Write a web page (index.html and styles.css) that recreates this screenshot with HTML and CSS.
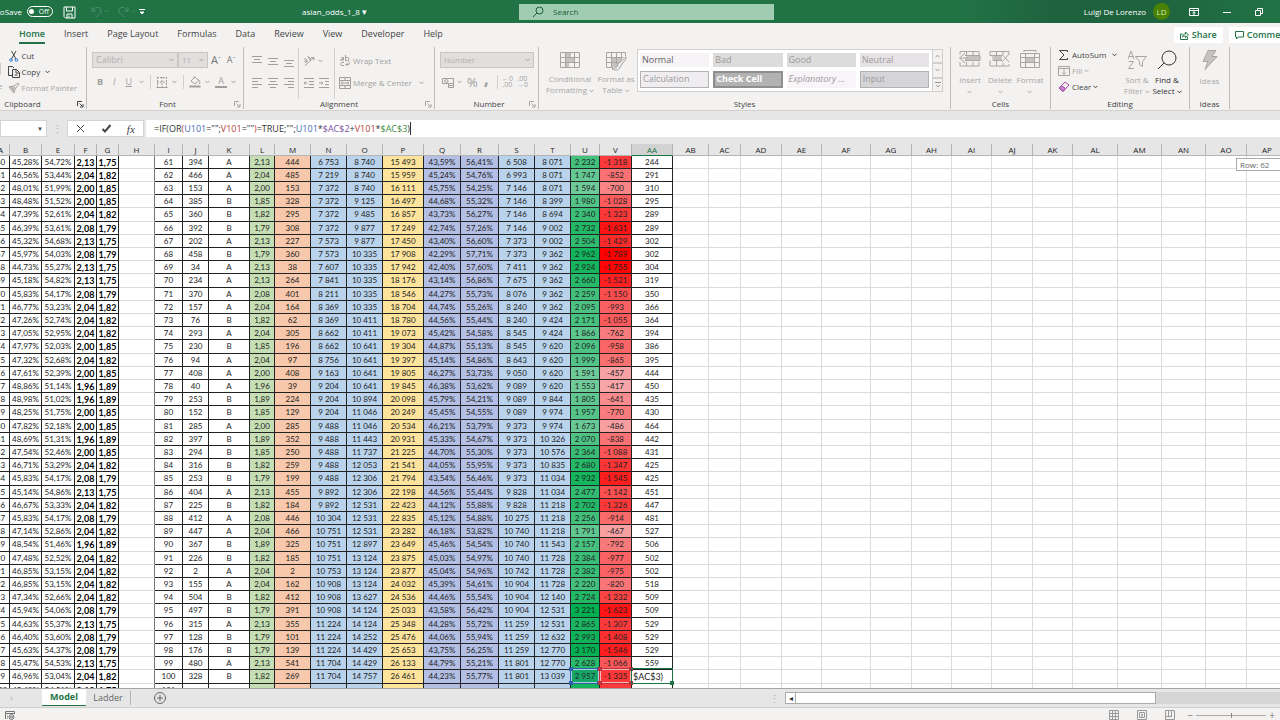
FILE: index.html
```html
<!DOCTYPE html>
<html lang="en">
<head>
  <meta charset="UTF-8">
  <title>asian_odds_1_8</title>
  <link rel="stylesheet" href="styles.css">
</head>
<body>
  <svg class="sprite" aria-hidden="true">
    <symbol id="caret" viewBox="0 0 5 4"><path d="M.5 .8l2 2 2-2"/></symbol>
    <symbol id="launch" viewBox="0 0 7 7"><path d="M.5 5V.5H5M2.5 2.5l3 3M6 3v3H3"/></symbol>
    <symbol id="al-t" viewBox="0 0 12 12"><path d="M1 1.5h10M3 4.5h6M1 7.5h10"/></symbol>
    <symbol id="al-m" viewBox="0 0 12 12"><path d="M1 3.5h10M3 6.5h6M1 9.5h10"/></symbol>
    <symbol id="al-b" viewBox="0 0 12 12"><path d="M1 5.5h10M3 8.5h6M1 11.5h10"/></symbol>
    <symbol id="al-l" viewBox="0 0 12 12"><path d="M1 1.5h10M1 4.5h6M1 7.5h10M1 10.5h6"/></symbol>
    <symbol id="al-c" viewBox="0 0 12 12"><path d="M1 1.5h10M3 4.5h6M1 7.5h10M3 10.5h6"/></symbol>
    <symbol id="al-r" viewBox="0 0 12 12"><path d="M1 1.5h10M5 4.5h6M1 7.5h10M5 10.5h6"/></symbol>
    <symbol id="outdent" viewBox="0 0 12 12"><path d="M1 1.5h10M6 4.5h5M6 7.5h5M1 10.5h10M4.5 6H1M2.5 4.5L1 6l1.5 1.5"/></symbol>
    <symbol id="indent" viewBox="0 0 12 12"><path d="M1 1.5h10M7 4.5h4M7 7.5h4M1 10.5h10M1 6h4M3.5 4.5L5 6 3.5 7.5"/></symbol>
  </svg>

  <header class="titlebar">
    <div class="quick">
      <label class="autosave">AutoSave <input type="checkbox" class="switch"><span class="knob">Off</span></label>
      <button class="save" aria-label="Save"><svg width="13" height="13" viewBox="0 0 13 13"><path d="M1 1h11v11H2.5L1 10.5zM3.5 1v4h6V1M4 12V8h5v4M6 9.5v2"/></svg></button>
      <button class="dim" aria-label="Undo"><svg width="18" height="12" viewBox="0 0 18 12"><path d="M1 1v4h4M1 5c2-4 8-5 9-1 .5 3-3 5-5 7M14 4.5l1.5 1.5L17 4.5"/></svg></button>
      <button class="dim" aria-label="Redo"><svg width="18" height="12" viewBox="0 0 18 12"><path d="M10 1v4H6M10 5C8 1 2 0 1 4c-.5 3 3 5 5 7M14 4.5l1.5 1.5L17 4.5"/></svg></button>
      <button class="custom" aria-label="Customize"><svg width="6" height="6" viewBox="0 0 6 6"><path d="M0 .5h6M1 3l2 2 2-2z"/></svg></button>
    </div>
    <button class="filename">asian_odds_1_8 <i>▾</i></button>
    <div class="search">
      <svg width="12" height="12" viewBox="0 0 12 12"><circle cx="7.5" cy="4.5" r="3.5"/><path d="M5 7L1 11"/></svg>
      <input type="search" placeholder="Search" aria-label="Search">
    </div>
    <div class="account">
      <span>Luigi De Lorenzo</span>
      <span class="avatar">LD</span>
      <button aria-label="Ribbon options"><svg width="10" height="8" viewBox="0 0 10 8"><path d="M.5.5h9v7h-9zM.5 2.5h9M5 7V4M3.5 5L5 3.7 6.5 5"/></svg></button>
      <button aria-label="Minimize"><svg width="8" height="8" viewBox="0 0 8 8"><path d="M0 4.5h8"/></svg></button>
      <button aria-label="Restore"><svg width="8" height="8" viewBox="0 0 8 8"><path d="M.5 2.5h5v5h-5zM2.5 2.5v-2h5v5h-2"/></svg></button>
    </div>
  </header>

  <nav class="tabs">
    <button class="on">Home</button>
    <button>Insert</button>
    <button>Page Layout</button>
    <button>Formulas</button>
    <button>Data</button>
    <button>Review</button>
    <button>View</button>
    <button>Developer</button>
    <button>Help</button>
    <div class="share">
      <button><svg width="9" height="9" viewBox="0 0 9 9"><path d="M2.5 3H.5v5.5h7V6M2.5 6c0-2 1-3 3-3V1l3 3-3 2.5V5c-1.5 0-2 0-3 1z"/></svg>Share</button>
      <button><svg width="9" height="9" viewBox="0 0 9 9"><path d="M.5.5h8v5.5h-5l-2 2V6h-1z"/></svg>Comments</button>
    </div>
  </nav>

  <main class="ribbon">
    <section class="group clipboard">
      <div class="body">
        <button class="big off paste"><svg width="18" height="22" viewBox="0 0 18 22"><path d="M1 3h12v16H1zM8 9h9v12H8z"/></svg>Paste</button>
        <div class="stack">
          <button><svg width="12" height="12" viewBox="0 0 12 12"><path d="M3.5 1l4.5 8M8 1L3.5 9"/><g class="blue"><circle cx="3" cy="10" r="1.3"/><circle cx="8.5" cy="10" r="1.3"/></g></svg>Cut</button>
          <button><svg width="12" height="12" viewBox="0 0 12 12"><path d="M4 9.5H.5v-9h4L6 2M4.5 3.5h4l3 3v5h-7zM8 3.5V7h3.5M6.5 9h3"/></svg>Copy <svg class="caret gap"><use href="#caret"/></svg></button>
          <button class="off"><svg width="12" height="12" viewBox="0 0 12 12"><path class="fill" d="M1 5l5 6 1-4-3-3z"/><path d="M1 5l5 6 1-4 4-5-1-1-4 3zM3 5l3 3M5 4l3 3"/></svg>Format Painter</button>
        </div>
      </div>
      <h2>Clipboard</h2><svg class="launch"><use href="#launch"/></svg>
    </section>

    <section class="group font">
      <div class="body rows">
        <div class="line">
          <span class="drop family"><select aria-label="Font"><option>Calibri</option></select><svg class="caret"><use href="#caret"/></svg></span>
          <span class="drop size"><select aria-label="Font size"><option>11</option></select><svg class="caret"><use href="#caret"/></svg></span>
          <button class="grow">A<sup>ˆ</sup></button><button class="shrink">A<sup>ˇ</sup></button>
        </div>
        <div class="line marks">
          <button class="b">B</button><button class="i">I</button><button class="u">U</button>
          <svg class="caret"><use href="#caret"/></svg><span class="rule"></span>
          <button aria-label="Borders"><svg width="12" height="12" viewBox="0 0 12 12"><path d="M1 1.5h10M1 6h10M1.5 1v10M6 1v10M10.5 1v10" stroke-dasharray="2 1"/><path d="M.5 11.5h11"/></svg></button>
          <svg class="caret"><use href="#caret"/></svg><span class="rule"></span>
          <button aria-label="Fill colour"><svg width="12" height="12" viewBox="0 0 12 12"><path d="M2 5l4-4 3.5 3.5L6 8zM5 2V.5M9 4c2 0 2 2 1.5 4"/><path d="M.5 10.5h11" stroke-width="2"/></svg></button>
          <svg class="caret"><use href="#caret"/></svg>
          <button class="ink">A</button>
          <svg class="caret"><use href="#caret"/></svg>
        </div>
      </div>
      <h2>Font</h2><svg class="launch off"><use href="#launch"/></svg>
    </section>

    <section class="group align">
      <div class="body">
        <div class="rows trio">
          <div class="line"><button aria-label="Top"><svg class="ic"><use href="#al-t"/></svg></button><button aria-label="Middle"><svg class="ic"><use href="#al-m"/></svg></button><button aria-label="Bottom"><svg class="ic"><use href="#al-b"/></svg></button></div>
          <div class="line"><button aria-label="Left"><svg class="ic"><use href="#al-l"/></svg></button><button aria-label="Center"><svg class="ic"><use href="#al-c"/></svg></button><button aria-label="Right"><svg class="ic"><use href="#al-r"/></svg></button></div>
        </div>
        <div class="rows duo">
          <div class="line"><button aria-label="Orientation"><svg class="ic" viewBox="0 0 12 12"><path d="M2 10.5l9-8M8 2.5h3v3M1 4.5c2-2 3 0 3 2.5M4 5.5c-2-.5-3 .5-2 1.5s2 0 2-1M5 1l2 4c1-2 0-3-1-2"/></svg></button><svg class="caret"><use href="#caret"/></svg></div>
          <div class="line"><button aria-label="Decrease indent"><svg class="ic"><use href="#outdent"/></svg></button><button aria-label="Increase indent"><svg class="ic"><use href="#indent"/></svg></button></div>
        </div>
        <div class="rows wrap">
          <div class="line"><button><svg class="ic" viewBox="0 0 12 12"><path d="M4.5 5.5V2.5h-2M4.5 4c-3-.5-4 1.5-2 1.5l2-1M6.5 0v5.5h2c2 0 2-3 0-3h-2M5 7.5H3c-2 0-2 3 0 3h2M7 9.5h2c2 0 2-3 0-3M8.5 8L7 9.5 8.5 11"/></svg>Wrap Text</button></div>
          <div class="line"><button><svg class="ic" viewBox="0 0 12 12"><path d="M.5.5h11v11H.5zM.5 3.5h11M.5 8.5h11M6 .5v3M6 8.5v3M2 6h8M3.5 4.5L2 6l1.5 1.5M8.5 4.5L10 6 8.5 7.5"/></svg>Merge &amp; Center</button><svg class="caret"><use href="#caret"/></svg></div>
        </div>
      </div>
      <h2>Alignment</h2><svg class="launch off"><use href="#launch"/></svg>
    </section>

    <section class="group number">
      <div class="body rows">
        <div class="line"><span class="drop format"><select aria-label="Number format"><option>Number</option></select><svg class="caret"><use href="#caret"/></svg></span></div>
        <div class="line">
          <button aria-label="Accounting"><svg class="ic" viewBox="0 0 12 12"><path d="M.5 2.5h11v5H.5zM4.5 3.5c2 0 2 3 0 3s-2-3 0-3zM2 5h1M6.5 7.5h5v4h-5zM6.5 9.5h5"/></svg></button>
          <svg class="caret"><use href="#caret"/></svg>
          <button class="pct">%</button><button class="comma">,</button><span class="rule"></span>
          <button class="dec"><span>←0</span><span>.00</span></button>
          <button class="dec"><span>.00</span><span>→0</span></button>
        </div>
      </div>
      <h2>Number</h2><svg class="launch off"><use href="#launch"/></svg>
    </section>

    <section class="group styles">
      <div class="body">
        <button class="big off cf"><svg width="20" height="16" viewBox="0 0 20 16"><path class="fill" d="M5 1h5v4H5zM5 5h9v5H5zM5 10h4v5H5z"/><path d="M.5.5h19v15H.5zM.5 5.5h19M.5 10.5h19M5.5 0v16M14.5 0v16M10 0v5"/></svg><span>Conditional<br>Formatting <svg class="caret"><use href="#caret"/></svg></span></button>
        <button class="big off ft"><svg width="21" height="19" viewBox="0 0 21 19"><path class="fill" d="M5 5h10v10H5z"/><path d="M.5.5h19v4M.5.5v15H7M.5 5.5h17M.5 10.5h12M5.5 0v16M10.5 0v12M15.5 0v8"/><path class="white" d="M20 5l-8 7-1 3-5 2c4 2 8 1 8-2l6-8z"/></svg><span>Format as<br>Table <svg class="caret"><use href="#caret"/></svg></span></button>
        <div class="gallery">
          <button class="s-normal">Normal</button><button class="s-bad">Bad</button><button class="s-bad">Good</button><button class="s-neutral">Neutral</button>
          <button class="s-calc">Calculation</button><button class="s-check">Check Cell</button><button class="s-expl">Explanatory ...</button><button class="s-input">Input</button>
        </div>
        <div class="scroller">
          <button aria-label="Up"><svg class="caret up"><use href="#caret"/></svg></button><button aria-label="Down"><svg class="caret"><use href="#caret"/></svg></button><button aria-label="More"><svg width="6" height="6" viewBox="0 0 6 6"><path d="M0 .5h6M1 3l2 2 2-2"/></svg></button>
        </div>
      </div>
      <h2>Styles</h2>
    </section>

    <section class="group cells">
      <div class="body">
        <button class="big off"><svg width="22" height="18" viewBox="0 0 22 18"><path class="fill" d="M8 6h13v5H5z"/><path d="M1 1.5h19v4M1 1.5v3M1 12v4h19v-4M7.5 1v4M14 1v4M7.5 12v4M14 12v4M6 5.5h15v5H6M6 3L.5 8 6 13M1 8h8"/></svg><span>Insert<br><svg class="caret"><use href="#caret"/></svg></span></button>
        <button class="big off"><svg width="22" height="18" viewBox="0 0 22 18"><path class="fill" d="M5 6h8v5H5z"/><path d="M1 1.5h19v3M1 1.5v4h12M1 10.5v5.5h19v-2M7.5 1v4M14 1v3M7.5 11v5M14 13v3M4 5.5v5h9M13 4l7 8M20 4l-7 8"/></svg><span>Delete<br><svg class="caret"><use href="#caret"/></svg></span></button>
        <button class="big off"><svg width="22" height="18" viewBox="0 0 22 18"><path class="fill" d="M6 8h10v4H6z"/><path d="M1.5 3.5h19v14h-19zM1.5 7.5h19M1.5 12.5h19M6.5 3v14M15.5 3v14M5 .5h12M5 0v2M17 0v2"/></svg><span>Format<br><svg class="caret"><use href="#caret"/></svg></span></button>
      </div>
      <h2>Cells</h2>
    </section>

    <section class="group editing">
      <div class="body">
        <div class="stack">
          <button><svg width="12" height="12" viewBox="0 0 12 12"><path d="M9.5 3V1.5H1.5L6 6l-4.5 4.5h8V9"/></svg>AutoSum <svg class="caret gap"><use href="#caret"/></svg></button>
          <button class="off"><svg width="12" height="12" viewBox="0 0 12 12"><path d="M.5 1.5h11v9H.5zM.5 3.5h11M6 4.5v5M4 7.5l2 2 2-2"/></svg>Fill <svg class="caret"><use href="#caret"/></svg></button>
          <button><svg class="purple" width="12" height="12" viewBox="0 0 12 12"><path d="M1 7l6-6 4 3-6 6.5z"/><path class="solid" d="M1 7l2.5-2.5 4 3L5 10.5z"/></svg>Clear <svg class="caret"><use href="#caret"/></svg></button>
        </div>
        <button class="big off sort"><svg width="20" height="20" viewBox="0 0 20 20"><path d="M1 9l3-8 3 8M2 6.5h4M1.5 11.5h5l-5 7h5.5M8.5 6.5h11l-4 5v5l-3-2v-3z"/></svg><span>Sort &amp;<br>Filter <svg class="caret"><use href="#caret"/></svg></span></button>
        <button class="big find"><svg width="20" height="20" viewBox="0 0 20 20"><circle cx="12" cy="8" r="7"/><path d="M7 13l-6 6"/></svg><span>Find &amp;<br>Select <svg class="caret"><use href="#caret"/></svg></span></button>
      </div>
      <h2>Editing</h2>
    </section>

    <section class="group ideas">
      <div class="body">
        <button class="big off"><svg width="16" height="20" viewBox="0 0 16 20"><path class="fill" d="M6 .5h8l-4 6h5L3 19.5l3-8H1z"/><path d="M6 .5h8l-4 6h5L3 19.5l3-8H1z"/></svg><span>Ideas</span></button>
      </div>
      <h2>Ideas</h2>
    </section>
  </main>

  <div class="formulabar">
    <div class="namebox"><input type="text" aria-label="Name box"><i>▼</i></div>
    <span class="grip">⋮</span>
    <div class="fx">
      <button aria-label="Cancel"><svg width="9" height="9" viewBox="0 0 9 9"><path d="M1 1l7 7M8 1L1 8"/></svg></button>
      <button aria-label="Enter"><svg width="9" height="9" viewBox="0 0 9 9"><path class="tick" d="M.5 5L3 7.5 8.5 1"/></svg></button>
      <button class="fn">fx</button>
    </div>
    <div class="formula" role="textbox" aria-label="Formula bar" contenteditable="true" spellcheck="false">=IF(OR<span class="red">(</span><span class="blue">U101</span>="";<span class="red">V101</span>=""<span class="red">)</span>=TRUE;"";<span class="blue">U101</span>*<span class="violet">$AC$2</span>+<span class="red">V101</span>*<span class="green">$AC$3</span>)<span class="cursor"></span></div>
  </div>

  <div class="sheet">
    <table>
      <colgroup></colgroup>
      <thead><tr></tr></thead>
      <tbody></tbody>
    </table>
    <div class="rowtip">Row: 62</div>
  </div>

  <footer class="sheets">
    <div class="pick">
      <span class="arrow">›</span>
      <button class="on">Model</button>
      <button>Ladder</button>
      <button class="add" aria-label="New sheet"><svg width="12" height="12" viewBox="0 0 12 12"><circle cx="6" cy="6" r="5.5"/><path d="M3 6h6M6 3v6"/></svg></button>
    </div>
    <span class="grip">⋮</span>
    <div class="hscroll"><button aria-label="Scroll left">◂</button><span class="thumb"></span></div>
  </footer>

  <div class="status">
    <svg width="10" height="9" viewBox="0 0 10 9"><path d="M.5 8V.5h9V3M.5 2.5h9M2 5h1M2 7h1"/><circle cx="6.5" cy="6" r="2.5"/><circle cx="6.5" cy="6" r="1"/></svg>
    <div class="views">
      <button aria-label="Normal view"><svg width="10" height="10" viewBox="0 0 10 10"><path d="M.5.5h9v9h-9zM.5 3.5h9M.5 6.5h9M3.5.5v9M6.5.5v9"/></svg></button>
      <button aria-label="Page layout view"><svg width="10" height="10" viewBox="0 0 10 10"><path d="M.5.5h9v9h-9zM2.5 2.5h5v5h-5zM4 4.5h2M4 6h2"/></svg></button>
      <button aria-label="Page break view"><svg width="10" height="10" viewBox="0 0 10 10"><path d="M.5.5h9v9h-9zM3.5.5v6h3v-6M.5 6.5h6"/></svg></button>
    </div>
    <div class="zoom"><span>−</span><input type="range" aria-label="Zoom" value="50"><span>+</span></div>
  </div>

  <script src="sheet.js"></script>
</body>
</html>
```
FILE: styles.css
```css
* { box-sizing: border-box; }
body {
  margin: 0;
  height: 100vh;
  display: flex;
  flex-direction: column;
  overflow: hidden;
  font-family: "Open Sans", "Noto Sans", sans-serif;
  font-size: 8px;
  line-height: 12px;
  color: #444;
  background: #f3f2f1;
}
button, input, select {
  font: inherit;
  color: inherit;
  background: none;
  border: 0;
  padding: 0;
  margin: 0;
}
button { white-space: nowrap; }
svg { fill: none; stroke: currentColor; flex: none; }
i { font-style: normal; }
.sprite { position: absolute; width: 0; height: 0; }
.caret { width: 5px; height: 4px; }
.caret.gap { margin-left: 4px; }
.caret.up { transform: rotate(180deg); }

/* title bar */
.titlebar {
  flex: none;
  height: 23px;
  display: grid;
  grid-template-columns: 302px 217px 255px 1fr;
  align-items: center;
  color: #fff;
  background: linear-gradient(90deg, #217346 75%, #1f633e 82%, #1f633e 90%, #217346);
}
.quick { display: flex; align-items: center; margin-left: -13px; }
.autosave { display: flex; align-items: center; gap: 5px; position: relative; }
.switch {
  appearance: none;
  width: 26px;
  height: 11px;
  border: 1px solid #fff;
  border-radius: 6px;
}
.knob { position: absolute; right: 4px; font-size: 7px; }
.knob::before {
  content: "";
  display: inline-block;
  width: 5px;
  height: 5px;
  margin-right: 5px;
  border-radius: 50%;
  background: #fff;
}
.save { margin: 2px 15px 0 10px; height: 13px; }
.dim { color: #4d9069; margin-right: 9px; height: 12px; }
.custom { height: 8px; line-height: 0; margin-left: -6px; }
.custom path { fill: #fff; }
.filename { justify-self: start; }
.filename i { font-size: 9px; }
.search {
  height: 16px;
  display: flex;
  align-items: center;
  gap: 9px;
  padding-left: 13px;
  color: #185c37;
  background: #a0cdb1;
}
.search input { flex: 1; min-width: 0; outline: 0; appearance: none; }
.search ::placeholder { color: #185c37; }
.account { justify-self: end; display: flex; align-items: center; padding-right: 17px; }
.account button { height: 8px; line-height: 0; margin-left: 24px; }
.avatar {
  width: 17px;
  height: 17px;
  line-height: 17px;
  margin: 0 -5px 0 7px;
  border-radius: 50%;
  text-align: center;
  background: #498205;
  color: #d9eab0;
}

/* ribbon tabs */
.tabs {
  flex: none;
  height: 24px;
  display: flex;
  align-items: center;
  gap: 19px;
  padding-left: 19px;
  font-size: 9px;
}
.tabs > button { height: 18px; border-bottom: 2px solid transparent; }
.tabs > .on { font-weight: 600; color: #217346; border-color: #217346; }
.share { margin-left: auto; display: flex; gap: 6px; font-weight: 600; color: #217346; margin-right: -20px; }
.share button {
  height: 16px;
  padding: 0 6px;
  display: flex;
  align-items: center;
  gap: 3px;
  background: #fff;
}

/* ribbon */
.ribbon {
  flex: none;
  display: flex;
  height: 64px;
  padding: 0 0 1px;
  border-bottom: 1px solid #d2d0ce;
}
.group {
  flex: none;
  position: relative;
  display: flex;
  flex-direction: column;
  border-right: 1px solid #c0bebc;
}
.group h2 {
  margin: 0;
  font-size: 8px;
  font-weight: 400;
  text-align: center;
  line-height: 10px;
}
.launch { position: absolute; right: 2px; bottom: 1px; width: 7px; height: 7px; }
.off { color: #a8a6a5; }
.fill { fill: #c4c3c2; stroke: none; }
.white { fill: #eee; }
.body { flex: 1; display: flex; padding-top: 1px; }
.rows { display: flex; flex-direction: column; gap: 6px; padding-top: 5px; }
.line { display: flex; align-items: center; height: 16px; }
.line button, .stack button { display: flex; align-items: center; }
.stack { display: flex; flex-direction: column; gap: 4px; padding-top: 1px; }
.stack button { height: 12px; gap: 2px; }
.big {
  display: flex;
  flex-direction: column;
  align-items: center;
  line-height: 11px;
}
.ic { width: 12px; height: 12px; }
.rule { width: 1px; height: 14px; background: #d2d0ce; }

.clipboard { width: 128px; margin-left: -41px; }
.clipboard .body { padding-left: 23px; gap: 6px; }
.clipboard .stack { padding-top: 2px; gap: 4px; }
.clipboard .stack button { gap: 1px; }
.clipboard .big { padding-top: 6px; gap: 4px; }
.clipboard .blue { color: #2b7cd3; }

.font, .align, .number { color: #a19f9d; }
.font h2, .align h2, .number h2 { color: #444; }
.font { width: 157px; padding-left: 5px; }
.drop { position: relative; }
.drop .caret { position: absolute; right: 4px; top: 6px; pointer-events: none; }
.drop select {
  appearance: none;
  display: block;
  width: 100%;
  height: 16px;
  padding: 0 3px;
  border: 1px solid #c8c6c4;
  color: #b1afad;
  background: #e1dfdd;
}
.family { width: 86px; }
.family select { font-size: 9px; }
.size { width: 30px; }
.grow { font-size: 11px; margin-left: 3px; }
.shrink { font-size: 9px; margin-left: 6px; }
.grow, .shrink { color: #7a7877; }
sup { font-size: 7px; line-height: 0; }
.marks { padding-left: 5px; font-size: 9px; }
.marks .b { font-weight: 700; margin-right: 10px; }
.marks .i { font-style: italic; margin-right: 10px; }
.marks .u { text-decoration: underline; margin-right: 7px; }
.marks .rule { margin: 0 5px 0 6px; }
.marks .caret { margin-left: 4px; }
.marks .u + .caret { margin-left: 0; }
.marks .ink { width: 12px; height: 12px; justify-content: center; border-bottom: 2px solid; margin-left: 5px; }

.align { width: 191px; }
.trio { padding-left: 7px; }
.trio .line { gap: 4px; }
.duo { margin-left: 3px; padding-left: 4px; }
.duo .line { gap: 3px; }
.wrap { padding-left: 4px; margin-left: 4px; }
.trio + .duo, .duo + .wrap { border-left: 1px solid #d2d0ce; }
.wrap button { gap: 2px; margin-right: 7px; }

.number { width: 104px; padding-left: 5px; }
.format { width: 94px; }
.number .line + .line { padding-left: 2px; }
.number .line .caret { margin: 0 5px 0 3px; }
.number .drop .caret { margin: 0; }
.pct { font-size: 13px; }
.comma { font-size: 18px; font-weight: 700; margin: -9px 8px 0 6px; }
.number .line .dec { flex-direction: column; font-size: 7px; line-height: 6px; margin-left: 4px; }

.styles { width: 412px; }
.styles .body { padding-top: 5px; }
.cf { width: 50px; margin-left: 6px; gap: 5px; }
.ft { width: 42px; gap: 2px; }
.gallery {
  flex: 1;
  height: 43px;
  margin-top: -3px;
  display: grid;
  grid-template-columns: repeat(4, 1fr);
  gap: 4px;
  padding: 3px 3px 3px 2px;
  background: #fff;
  border: 1px solid #d2d0ce;
}
.gallery button {
  font-size: 9px;
  line-height: 12px;
  text-align: left;
  padding-left: 2px;
  color: #9c9a9b;
  overflow: hidden;
}
.gallery .s-normal { color: #666; background: #f7f3f6; }
.gallery .s-bad { background: #dddcdd; }
.gallery .s-neutral { background: #e7e2e6; }
.gallery .s-calc { background: #efedef; border: 1px solid #b3b2b3; }
.gallery .s-check { background: #b3b2b3; border: 2px solid #8f8e8f; color: #fff; font-weight: 700; padding-left: 1px; }
.gallery .s-expl { background: #f8f4f8; font-style: italic; }
.gallery .s-input { background: #d5d4d6; border: 1px solid #b3b2b3; }
.scroller { width: 10px; height: 43px; margin: -3px 7px 0 0; display: flex; flex-direction: column; }
.scroller button { flex: 1; border: 1px solid #d2d0ce; border-left: 0; line-height: 0; color: #999; }

.cells { width: 100px; }
.cells .body { padding: 3px 0 0 4px; }
.cells .big, .editing .big { width: 30px; gap: 6px; }
.editing { width: 139px; }
.editing .body { padding: 2px 0 0 7px; }
.editing .stack { width: 64px; padding-top: 0; }
.editing .body .big { gap: 4px; padding-top: 1px; }
.editing .find { color: #333; }
.purple { color: #a349a4; }
.purple .solid { fill: #c982cb; }
.ideas { width: 40px; }
.ideas .big { width: 40px; padding-top: 2px; gap: 5px; }

/* formula bar */
.formulabar {
  flex: none;
  height: 33px;
  display: flex;
  padding: 9px 0 7px;
  background: #e6e6e6;
}
.namebox { width: 47px; display: flex; background: #fff; border: 1px solid #d4d4d4; align-items: center; }
.namebox input { width: 36px; }
.namebox i { font-size: 6px; }
.grip { width: 20px; text-align: center; line-height: 17px; font-size: 11px; color: #aaa; }
.fx { width: 77px; margin-right: 2px; display: flex; justify-content: space-around; align-items: center; background: #fff; border: 1px solid #d4d4d4; }
.fx button { line-height: 0; }
.fx .tick { stroke-width: 2; }
.fx .fn { font-family: "Liberation Serif", serif; font-style: italic; font-size: 11px; line-height: 12px; }
.formula { flex: 1; padding-left: 8px; font-size: 9px; line-height: 17px; background: #fff; color: #333; white-space: nowrap; outline: 0; }
.formula .red { color: #b8433b; }
.formula .blue { color: #3d6cb5; }
.formula .violet { color: #7c4fa3; }
.formula .green { color: #3d8b40; }
.cursor { border-right: 1px solid #333; }

/* sheet */
.sheet {
  flex: 1;
  min-height: 0;
  position: relative;
  overflow: hidden;
  background: #fff;
  border-bottom: 1px solid #a6a6a6;
}
table {
  table-layout: fixed;
  width: 0;
  margin-left: -8px;
  border-collapse: separate;
  border-spacing: 0;
  font-family: Lato, Carlito, sans-serif;
  color: #222;
}
th, td {
  height: 13px;
  padding: 0;
  line-height: 12px;
  text-align: center;
  white-space: nowrap;
  border: 0 solid #dcdcdc;
  border-width: 0 1px 1px 0;
}
tr:nth-child(5n) td { height: 14px; line-height: 13px; }
th {
  height: 12px;
  line-height: 11px;
  font-family: "Open Sans", sans-serif;
  font-weight: 400;
  border-color: #b5b5b5;
  background: #e6e6e6;
}
th.sel { color: #217346; background: #d2d2d2; border-bottom: 1px solid #217346; }
td.c { border-color: #222; }
td.c-H { border-right-color: #777; }
tr td.c-F, tr td.c-G { font-weight: 700; font-size: 9px; line-height: 11px; color: #000; }
td.c-G { border-right-color: #222; }
td.c-L { background: #c6deb4; }
td.c-M { background: #f7c8ab; }
td.c-N, td.c-O, td.c-S, td.c-T { background: #b9d3ed; }
td.c-P { background: #fde39b; }
td.c-Q, td.c-R { background: #b3bfe4; }

/* coloured references of the formula being edited */
.ref { position: relative; }
.box { position: absolute; z-index: 1; inset: -2px -1px -1px -1px; border: 1px solid; }
.box::before, .box::after {
  content: "";
  position: absolute;
  left: -2px;
  right: -2px;
  height: 4px;
  border: solid;
  border-width: 0 4px;
}
.box::before { top: -2px; }
.box::after { bottom: -2px; }
.box.blue { color: #2f5fa8; background: rgba(47, 95, 168, .15); }
.box.red { color: #c0303a; box-shadow: inset 0 0 0 1px #f4b8bb; }
.box.blue { box-shadow: inset 0 0 0 1px #a9cfe0; }
.box.green { color: #217346; }
.box.green::before { display: none; }
.box.green::after { border-left: 0; }
.ref.edit { text-align: left; padding-left: 1px; font-size: 9px; }

.rowtip {
  position: absolute;
  top: 14px;
  right: 0;
  width: 44px;
  height: 13px;
  padding-left: 3px;
  line-height: 11px;
  color: #666;
  background: #fff;
  border: 1px solid #aaa;
  border-right: 0;
}

/* sheet tabs */
.sheets { flex: none; height: 19px; display: flex; align-items: center; background: #e6e6e6; border-bottom: 1px solid #cfcfcf; }
.pick { flex: 1; display: flex; align-items: center; align-self: stretch; font-size: 9px; color: #666; }
.pick .arrow { width: 42px; padding-left: 10px; color: #aaa; }
.pick .on { width: 44px; height: 17px; align-self: flex-start; font-weight: 700; color: #217346; background: #fff; border-bottom: 1px solid #217346; }
.pick .on + button { width: 45px; height: 14px; border-right: 1px solid #b5b5b5; }
.pick .add { margin-left: 23px; height: 12px; line-height: 0; }
.sheets .grip { width: 22px; }
.hscroll { width: 495px; height: 12px; display: flex; background: #d6d6d6; }
.hscroll button { width: 11px; background: #fff; border: 1px solid #ababab; line-height: 8px; color: #333; }
.hscroll .thumb { width: 360px; background: #fff; border: 1px solid #ababab; border-left: 0; }

.status { flex: none; height: 12px; display: flex; align-items: center; padding: 2px 5px 0 5px; color: #777; }
.views { margin-left: auto; display: flex; gap: 18px; }
.views button { height: 10px; line-height: 0; color: #999; }
.zoom { display: flex; align-items: center; gap: 3px; margin-left: 13px; font-size: 10px; }
.zoom input { appearance: none; width: 70px; height: 1px; background: #aaa; }
.zoom input::-webkit-slider-thumb { appearance: none; width: 1px; height: 5px; background: #888; }
```
FILE: sheet.js
```js
const columns = [
  ["A", 18], ["B", 32], ["E", 33], ["F", 22], ["G", 22], ["H", 36], ["I", 28], ["J", 26],
  ["K", 41], ["L", 25], ["M", 36], ["N", 36], ["O", 36], ["P", 41], ["Q", 37], ["R", 38],
  ["S", 36], ["T", 36], ["U", 29], ["V", 32], ["AA", 41], ["AB", 36], ["AC", 32], ["AD", 41],
  ["AE", 40], ["AF", 49], ["AG", 41], ["AH", 40], ["AI", 40], ["AJ", 41], ["AK", 40],
  ["AL", 45], ["AM", 44], ["AN", 44], ["AO", 41], ["AP", 41], ["AQ", 41]
];

// odds for side A -> odds for side B
const odds = { "2,13": "1,75", "2,08": "1,79", "2,04": "1,82", "2,00": "1,85", "1,96": "1,89" };

// B F J K M N O P Q S T U V AA
const data = `
45.28 2,13 394 A 444 6753 8740 15493 43.59 6508 8071 2232 -1318 244
46.56 2,04 466 A 485 7219 8740 15959 45.24 6993 8071 1747 -852 291
48.01 2,00 153 A 153 7372 8740 16111 45.75 7146 8071 1594 -700 310
48.48 2,00 385 B 328 7372 9125 16497 44.68 7146 8399 1980 -1028 295
47.39 2,04 360 B 295 7372 9485 16857 43.73 7146 8694 2340 -1323 289
46.39 2,08 392 B 308 7372 9877 17249 42.74 7146 9002 2732 -1631 289
45.32 2,13 202 A 227 7573 9877 17450 43.40 7373 9002 2504 -1429 302
45.97 2,08 458 B 360 7573 10335 17908 42.29 7373 9362 2962 -1789 302
44.73 2,13 34 A 38 7607 10335 17942 42.40 7411 9362 2924 -1755 304
45.18 2,13 234 A 264 7841 10335 18176 43.14 7675 9362 2660 -1521 319
45.83 2,08 370 A 401 8211 10335 18546 44.27 8076 9362 2259 -1150 350
46.77 2,04 157 A 164 8369 10335 18704 44.74 8240 9362 2095 -993 366
47.26 2,04 76 B 62 8369 10411 18780 44.56 8240 9424 2171 -1055 364
47.05 2,04 293 A 305 8662 10411 19073 45.42 8545 9424 1866 -762 394
47.97 2,00 230 B 196 8662 10641 19304 44.87 8545 9620 2096 -958 386
47.32 2,04 94 A 97 8756 10641 19397 45.14 8643 9620 1999 -865 395
47.61 2,00 408 A 408 9163 10641 19805 46.27 9050 9620 1591 -457 444
48.86 1,96 40 A 39 9204 10641 19845 46.38 9089 9620 1553 -417 450
48.98 1,96 253 B 224 9204 10894 20098 45.79 9089 9844 1805 -641 435
48.25 2,00 152 B 129 9204 11046 20249 45.45 9089 9974 1957 -770 430
47.82 2,00 285 A 285 9488 11046 20534 46.21 9373 9974 1673 -486 464
48.69 1,96 397 B 352 9488 11443 20931 45.33 9373 10326 2070 -838 442
47.54 2,00 294 B 250 9488 11737 21225 44.70 9373 10576 2364 -1088 431
46.71 2,04 316 B 259 9488 12053 21541 44.05 9373 10835 2680 -1347 425
45.83 2,08 253 B 199 9488 12306 21794 43.54 9373 11034 2932 -1545 425
45.14 2,13 404 A 455 9892 12306 22198 44.56 9828 11034 2477 -1142 451
46.67 2,04 225 B 184 9892 12531 22423 44.12 9828 11218 2702 -1326 447
45.83 2,08 412 A 446 10304 12531 22835 45.12 10275 11218 2256 -914 481
47.14 2,04 447 A 466 10751 12531 23282 46.18 10740 11218 1791 -467 527
48.54 1,96 367 B 325 10751 12897 23649 45.46 10740 11543 2157 -792 506
47.48 2,04 226 B 185 10751 13124 23875 45.03 10740 11728 2384 -977 502
46.85 2,04 2 A 2 10753 13124 23877 45.04 10742 11728 2382 -975 502
46.85 2,04 155 A 162 10908 13124 24032 45.39 10904 11728 2220 -820 518
47.34 2,04 504 B 412 10908 13627 24536 44.46 10904 12140 2724 -1232 509
45.94 2,08 497 B 391 10908 14124 25033 43.58 10904 12531 3221 -1623 509
44.63 2,13 315 A 355 11224 14124 25348 44.28 11259 12531 2865 -1307 529
46.40 2,08 128 B 101 11224 14252 25476 44.06 11259 12632 2993 -1408 529
45.63 2,08 176 B 139 11224 14429 25653 43.75 11259 12770 3170 -1546 529
45.47 2,13 480 A 541 11704 14429 26133 44.79 11801 12770 2628 -1066 559
46.96 2,04 328 B 269 11704 14757 26461 44.23 11801 13039 2957 -1335 $AC$3)
45.49 2,13`.trim().split("\n").map(line => line.split(" "));

const percent = v => v === undefined ? "" : Number(v).toFixed(2).replace(".", ",") + "%";
const thousands = v => v === undefined ? "" : v.replace(/(\d)(\d{3})$/, "$1 $2");

// colour scale between two rgb triples
function scale(value, min, max, from, to) {
  const t = (value - min) / (max - min);
  return `rgb(${from.map((c, i) => Math.round(c + (to[i] - c) * t)).join(",")})`;
}

document.querySelector("colgroup").innerHTML = columns.map(([, w]) => `<col style="width:${w}px">`).join("");
document.querySelector("table").style.width = columns.reduce((sum, [, w]) => sum + w, 0) + "px";
document.querySelector("thead tr").innerHTML = columns
  .map(([name]) => `<th${name === "AA" ? ' class="sel"' : ""}>${name}</th>`).join("");

document.querySelector("tbody").innerHTML = data.map((row, i) => {
  const [B, F, J, K, M, N, O, P, Q, S, T, U, V, AA] = row;
  const cells = {
    A: 60 + i, B: percent(B), E: percent(100 - B), F, G: odds[F], I: 61 + i, J: J || "", K: K || "",
    L: K ? (K === "A" ? F : odds[F]) : "", M: M || "", N: thousands(N), O: thousands(O), P: thousands(P),
    Q: percent(Q), R: Q ? percent(100 - Q) : "", S: thousands(S), T: thousands(T),
    U: thousands(U), V: thousands(V), AA: AA || ""
  };
  const fill = {
    U: scale(U || 2900, 1553, 3221, [112, 203, 155], [0, 176, 80]),
    V: scale(V || -1300, -417, -1789, [246, 166, 168], [255, 0, 0])
  };
  const boxes = i === 39 ? { U: "blue", V: "red", AA: "green" } : {};

  return "<tr>" + columns.map(([name]) => {
    let cls = (name in cells ? "c " : "") + "c-" + name;
    if (boxes[name]) cls += name === "AA" ? " ref edit" : " ref";
    const style = fill[name] ? ` style="background:${fill[name]}"` : "";
    const box = boxes[name] ? `<span class="box ${boxes[name]}"></span>` : "";
    return `<td class="${cls}"${style}>${cells[name] ?? ""}${box}</td>`;
  }).join("") + "</tr>";
}).join("");
```
